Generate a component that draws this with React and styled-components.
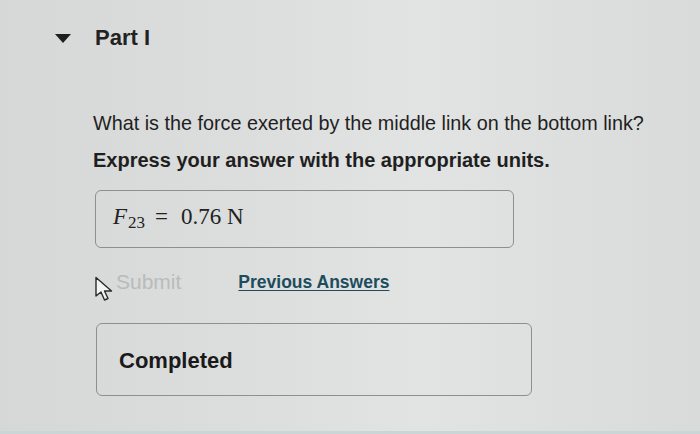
import React from "react";
import styled, { createGlobalStyle } from "styled-components";

const Global = createGlobalStyle`
  html, body {
    margin: 0;
    padding: 0;
    background: #d8d9d9;
  }
  body {
    font-family: "Liberation Sans", Arial, sans-serif;
    color: #1c1c1c;
  }
`;

const Page = styled.div`
  width: 700px;
  height: 434px;
  box-sizing: border-box;
  padding: 21px 0 0 0;
  background: linear-gradient(90deg, #d6d7d7 0%, #dcdddd 35%, #e2e3e3 60%, #d9dada 100%);
  border-bottom: 3px solid #c9d6d5;
  overflow: hidden;
`;

const PartHeader = styled.div`
  display: flex;
  align-items: center;
  height: 34px;
  padding-left: 55px;
`;

const Caret = styled.span`
  width: 0;
  height: 0;
  border-left: 8.5px solid transparent;
  border-right: 8.5px solid transparent;
  border-top: 9px solid #1e1e1e;
  margin-right: 24px;
  margin-top: 0;
`;

const PartTitle = styled.div`
  font-size: 22px;
  font-weight: bold;
  color: #222;
`;

const Body = styled.div`
  padding: 56px 0 0 93px;
  display: flex;
  flex-direction: column;
`;

const Question = styled.p`
  margin: 0;
  font-size: 19.8px;
  line-height: 24px;
  color: #1f1f1f;
`;

const Instruction = styled.p`
  margin: 13px 0 0 0;
  font-size: 20px;
  line-height: 24px;
  font-weight: bold;
  color: #1f1f1f;
`;

const Box = styled.div`
  box-sizing: border-box;
  width: ${(p) => p.$width}px;
  height: ${(p) => p.$height}px;
  border: 1.5px solid #8e8f8f;
  border-radius: 6px;
  display: flex;
  align-items: center;
  margin-left: ${(p) => p.$offset || 0}px;
  margin-top: ${(p) => p.$top}px;
  padding-left: ${(p) => p.$pad}px;
`;

const MathExpr = styled.div`
  font-family: "Liberation Serif", "Times New Roman", serif;
  font-size: 23px;
  color: #222;
  display: flex;
  align-items: baseline;
  margin-top: -4px;
`;

const Var = styled.i`
  font-style: italic;
`;

const Sub = styled.span`
  font-size: 17px;
  position: relative;
  top: 4px;
  margin-left: 1px;
`;

const Equals = styled.span`
  margin: 0 13px 0 10px;
`;

const Actions = styled.div`
  display: flex;
  align-items: center;
  margin-top: 19px;
  height: 30px;
`;

const Cursor = styled.svg`
  width: 23px;
  height: 27px;
  margin-top: 14px;
  margin-right: -1px;
  margin-left: 1px;
`;

const SubmitText = styled.span`
  font-size: 21px;
  color: #b9bbbb;
`;

const LinkText = styled.a`
  margin-left: 57px;
  font-size: 17.5px;
  font-weight: bold;
  color: #1d4d5c;
  text-decoration: underline;
  text-underline-offset: 2px;
`;

const Completed = styled.div`
  font-size: 22px;
  font-weight: bold;
  color: #1a1a1a;
  margin-top: 2px;
`;

export default function App() {
  return (
    <>
      <Global />
      <Page>
        <PartHeader>
          <Caret />
          <PartTitle>Part I</PartTitle>
        </PartHeader>
        <Body>
          <Question>What is the force exerted by the middle link on the bottom link?</Question>
          <Instruction>Express your answer with the appropriate units.</Instruction>
          <Box $width={419} $height={58} $offset={2} $top={18} $pad={17}>
            <MathExpr>
              <Var>F</Var>
              <Sub>23</Sub>
              <Equals>=</Equals>
              <span>0.76 N</span>
            </MathExpr>
          </Box>
          <Actions>
            <Cursor viewBox="0 0 23 27">
              <path
                d="M2 1.5 L2 20 L7 16 L10.5 24 L14 22.5 L10.5 15 L17.5 15 Z"
                fill="#f4f4f4"
                stroke="#2a2a2a"
                strokeWidth="1.4"
                strokeLinejoin="round"
              />
            </Cursor>
            <SubmitText>Submit</SubmitText>
            <LinkText>Previous Answers</LinkText>
          </Actions>
          <Box $width={436} $height={73} $offset={3} $top={26} $pad={22}>
            <Completed>Completed</Completed>
          </Box>
        </Body>
      </Page>
    </>
  );
}
